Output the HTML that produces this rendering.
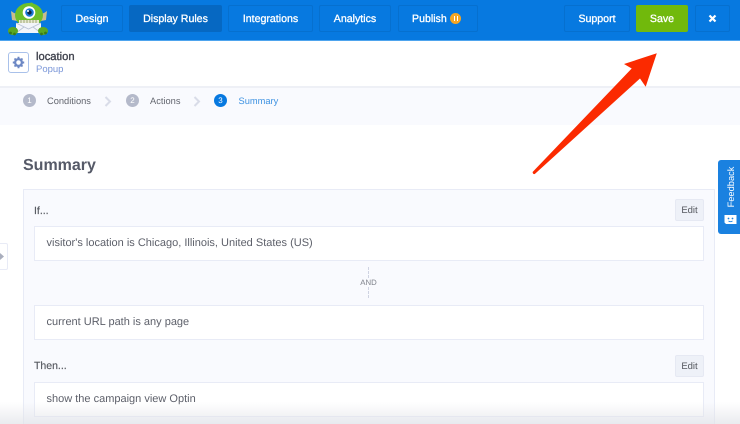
<!DOCTYPE html>
<html><head><meta charset="utf-8">
<style>
*{box-sizing:border-box;margin:0;padding:0}
html,body{width:740px;height:424px;overflow:hidden;background:#fff;font-family:"Liberation Sans",sans-serif;text-rendering:geometricPrecision}
.a{position:absolute}
#page{position:relative;width:740px;height:424px;overflow:hidden}
.btn{position:absolute;top:5px;height:27px;border:1px solid #0670cf;border-radius:2px;background:#0779e0;color:#fff;font-size:10.6px;-webkit-text-stroke:.3px #fff;line-height:26px;text-align:center}
.in{position:absolute;left:34px;width:670px;height:35px;background:#fff;border:1px solid #e8ebf6;color:#5c5f69;font-size:11px;line-height:32px;padding-left:11.5px}
.edit{position:absolute;left:675px;width:29px;height:22px;background:#eef1f8;border:1px solid #e6e9f3;border-radius:2px;color:#55585f;font-size:9.5px;line-height:21px;text-align:center}
.lbl{position:absolute;left:34px;color:#55585f;font-size:10.5px;-webkit-text-stroke:.15px #55585f}
.step{position:absolute;font-size:9.3px;color:#62656e;top:96px}
.n{position:absolute;top:94px;width:13px;height:13px;border-radius:50%;background:#b4b9ca;color:#fff;font-size:8px;line-height:13px;text-align:center}
</style></head><body><div id="page">

<div class="a" style="left:0;top:0;width:740px;height:40px;background:#0779e0"></div>
<div class="a" style="left:0;top:40px;width:740px;height:1px;background:#4ea4ee"></div>

<svg class="a" style="left:0;top:0" width="56" height="40" viewBox="0 0 56 40">
<path d="M11 11 L14 13 L18 14 L17 21 L12 20 Z" fill="#c9bd8e"/>
<path d="M47 11 L44 13 L41 14 L41 21 L46 20 Z" fill="#c9bd8e"/>
<ellipse cx="29" cy="15" rx="14" ry="12" fill="#6cc02a"/>
<path d="M23 4 L32 2.5 L36 6 L22 6 Z" fill="#6cc02a"/>
<circle cx="29" cy="12.5" r="6.3" fill="#fff"/>
<circle cx="29.5" cy="12.5" r="4.3" fill="#1b78d8"/>
<circle cx="29.5" cy="12.5" r="2.2" fill="#0c2748"/>
<circle cx="28" cy="11" r="1" fill="#fff"/>
<path d="M19 20 H39 V24 H19 Z" fill="#e8ead0"/>
<path d="M21 20v4M24 20v4M27 20v4M30 20v4M33 20v4M36 20v4" stroke="#7d8a55" stroke-width=".7"/>
<path d="M16 23 L41 23 L41 33 L16 33 Z" fill="#f2f5fa"/>
<path d="M16 23 L28.5 29 L41 23 M16 33 L24 27 M41 33 L33 27" fill="none" stroke="#b9c3d4" stroke-width=".9"/>
<ellipse cx="13" cy="31" rx="5" ry="4" fill="#5aa824"/>
<ellipse cx="43" cy="31" rx="5" ry="4" fill="#5aa824"/>
<circle cx="10.5" cy="33" r="1.4" fill="#3a7a18"/><circle cx="14.5" cy="34" r="1.4" fill="#3a7a18"/>
<circle cx="41.5" cy="34" r="1.4" fill="#3a7a18"/><circle cx="45.5" cy="33" r="1.4" fill="#3a7a18"/>
</svg>

<div class="btn" style="left:61px;width:62px">Design</div>
<div class="btn" style="left:129px;width:93px;background:#0668c2;border-color:#0668c2">Display Rules</div>
<div class="btn" style="left:228px;width:85px">Integrations</div>
<div class="btn" style="left:319px;width:72px">Analytics</div>
<div class="btn" style="left:398px;width:80px;text-align:left;padding-left:13px">Publish</div>
<div class="a" style="left:450px;top:13px;width:11px;height:11px;border-radius:50%;background:#f5a623"></div>
<div class="a" style="left:453.5px;top:16px;width:1.5px;height:5px;background:#fff"></div>
<div class="a" style="left:456.5px;top:16px;width:1.5px;height:5px;background:#fff"></div>
<div class="btn" style="left:564px;width:66px">Support</div>
<div class="btn" style="left:636px;width:52px;background:#71b90c;border-color:#71b90c">Save</div>
<div class="btn" style="left:695px;width:35px"></div>
<svg class="a" style="left:708px;top:14px" width="9" height="9" viewBox="0 0 9 9"><path d="M1.5 1.5 L7.5 7.5 M7.5 1.5 L1.5 7.5" stroke="#fff" stroke-width="2.2"/></svg>

<div class="a" style="left:8px;top:52px;width:21px;height:21px;border:1px solid #a9c1ea;border-radius:3px;background:#fff"></div>
<svg class="a" style="left:12px;top:56px" width="13" height="13" viewBox="0 0 13 13">
<circle cx="6.5" cy="6.5" r="3.4" fill="none" stroke="#6d88c4" stroke-width="2.3"/>
<path d="M6.5 .8V3M6.5 10V12.2M.8 6.5H3M10 6.5H12.2M2.5 2.5L4 4M9 9L10.5 10.5M10.5 2.5L9 4M4 9L2.5 10.5" stroke="#6d88c4" stroke-width="1.9"/>
</svg>
<div class="a" style="left:36px;top:51px;font-size:11.2px;color:#40434e;-webkit-text-stroke:.35px #40434e;line-height:13px">location</div>
<div class="a" style="left:36px;top:63px;font-size:9.5px;color:#7b97d8;line-height:13px">Popup</div>

<div class="a" style="left:0;top:86px;width:740px;height:2px;background:#eef0f6"></div>
<div class="a" style="left:0;top:88px;width:740px;height:37px;background:#f9fafe"></div>

<div class="n" style="left:23px">1</div>
<div class="step" style="left:47px">Conditions</div>
<svg class="a" style="left:104px;top:96px" width="8" height="11" viewBox="0 0 8 11"><path d="M1.5 1 L6 5.5 L1.5 10" fill="none" stroke="#d9dce8" stroke-width="2"/></svg>
<div class="n" style="left:126px">2</div>
<div class="step" style="left:150px">Actions</div>
<svg class="a" style="left:193px;top:96px" width="8" height="11" viewBox="0 0 8 11"><path d="M1.5 1 L6 5.5 L1.5 10" fill="none" stroke="#d9dce8" stroke-width="2"/></svg>
<div class="n" style="left:214px;background:#0779e0">3</div>
<div class="step" style="left:238.5px;color:#3f93e2">Summary</div>

<div class="a" style="left:23px;top:156px;font-size:16px;font-weight:bold;color:#565a68;line-height:20px">Summary</div>

<div class="a" style="left:23px;top:189px;width:692px;height:240px;background:#f9fafe;border:1px solid #e8ebf6"></div>

<div class="lbl" style="top:205px">If...</div>
<div class="edit" style="top:199px">Edit</div>
<div class="in" style="top:226px">visitor's location is Chicago, Illinois, United States (US)</div>

<div class="a" style="left:368px;top:267px;height:11px;border-left:1px dashed #cfd3e2"></div>
<div class="a" style="left:340px;width:57px;top:277px;text-align:center;font-size:7.8px;color:#7d808a;line-height:11px">AND</div>
<div class="a" style="left:368px;top:287px;height:11px;border-left:1px dashed #cfd3e2"></div>

<div class="in" style="top:305px">current URL path is any page</div>
<div class="lbl" style="top:360px">Then...</div>
<div class="edit" style="top:355px">Edit</div>
<div class="in" style="top:382px">show the campaign view Optin</div>

<div class="a" style="left:-1px;top:243px;width:9px;height:27px;background:#fff;border:1px solid #e8ebf6;border-radius:0 2px 2px 0"></div>
<svg class="a" style="left:0;top:253px" width="5" height="7" viewBox="0 0 5 7"><path d="M0 0 L4 3.5 L0 7 Z" fill="#a9aebd"/></svg>

<div class="a" style="left:718px;top:160px;width:22px;height:74px;background:#1a81e0;border-radius:3px 0 0 3px"></div>
<div class="a" style="left:701px;top:179.5px;width:60px;height:14px;line-height:14px;transform:rotate(-90deg);text-align:center;color:#fff;font-size:9.3px">Feedback</div>
<svg class="a" style="left:724px;top:214px" width="13" height="11" viewBox="0 0 13 11"><path d="M0.5 1 H12.5 V10 H2 L0.5 8.5 Z" fill="#fff"/><circle cx="4.5" cy="4.5" r=".9" fill="#1a81e0"/><circle cx="8.5" cy="4.5" r=".9" fill="#1a81e0"/><path d="M4.5 7 Q6.5 8.4 8.5 7" stroke="#1a81e0" stroke-width=".8" fill="none"/></svg>

<div class="a" style="left:0;top:402px;width:740px;height:22px;background:linear-gradient(to bottom,rgba(225,227,232,0),rgba(225,227,232,.7));"></div>

<svg class="a" style="left:0;top:0" width="740" height="424" viewBox="0 0 740 424">
<path d="M656.8 53.3 L624 64 L631.7 68.5 L532.6 172 Q532.8 174.5 534.8 174 L640 78.5 L645.7 86.7 Z" fill="#fb2a00"/>
</svg>

</div></body></html>
